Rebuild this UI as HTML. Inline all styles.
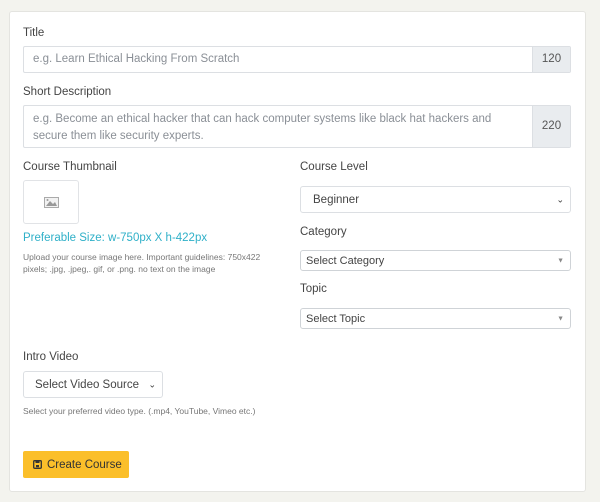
<!DOCTYPE html>
<html><head><style>
*{box-sizing:border-box;margin:0;padding:0}
body{width:600px;height:502px;background:#f3f3ee;font-family:"Liberation Sans",sans-serif;position:relative;overflow:hidden;color:#333}
.card{position:absolute;left:9px;top:11px;width:577px;height:481px;background:#fff;border:1px solid #e4e4e0;border-radius:3px}
.a{position:absolute}
.lbl{font-size:11.5px;color:#444}
.inp{border:1px solid #dcdfe3;border-radius:2px;background:#fff;font-size:11.5px;color:#8a8f96;padding-left:9px}
.sel{border:1px solid #cfd3d7;border-radius:3px;background:#fff;font-size:11px;color:#444;padding-left:5px;display:flex;align-items:center}
.caret{position:absolute;right:6px;top:50%;transform:translateY(-50%);font-size:7px;color:#888}
.cnt{position:absolute;background:#e9ecef;border-left:1px solid #dcdfe3;font-size:11.5px;color:#555;display:flex;align-items:center;justify-content:center}
</style></head><body>
<div class="card"></div>
<div class="a lbl" style="left:23px;top:27px">Title</div>
<div class="a inp" style="left:23px;top:46px;width:548px;height:27px;line-height:25px">e.g. Learn Ethical Hacking From Scratch
<div class="cnt" style="right:0;top:0;width:38px;height:25px">120</div></div>
<div class="a lbl" style="left:23px;top:86px">Short Description</div>
<div class="a inp" style="left:23px;top:105px;width:548px;height:43px;line-height:17px;padding-top:5px">e.g. Become an ethical hacker that can hack computer systems like black hat hackers and<br>secure them like security experts.
<div class="cnt" style="right:0;top:0;width:38px;height:41px">220</div></div>
<div class="a lbl" style="left:23px;top:161px">Course Thumbnail</div>
<div class="a" style="left:23px;top:180px;width:56px;height:44px;border:1px solid #e1e3e6;border-radius:3px">
<svg class="a" style="left:20px;top:16px" width="15" height="11" viewBox="0 0 15 11"><rect x=".5" y=".5" width="14" height="10" fill="#f2f2f2" stroke="#aaa"/><path d="M2 9 L6 4 L9 7 L11 5 L13 9Z" fill="#999"/><circle cx="3.5" cy="3" r="1" fill="#999"/></svg></div>
<div class="a" style="left:23px;top:232px;font-size:11.5px;color:#2fb0c8">Preferable Size: w-750px X h-422px</div>
<div class="a" style="left:23px;top:251px;font-size:8.5px;color:#777;line-height:12px;width:260px">Upload your course image here. Important guidelines: 750x422 pixels; .jpg, .jpeg,. gif, or .png. no text on the image</div>
<div class="a lbl" style="left:300px;top:161px">Course Level</div>
<div class="a sel" style="left:300px;top:186px;width:271px;height:27px;border-color:#dcdfe3;padding-left:12px;font-size:11.5px">Beginner<span class="caret" style="font-size:9px;color:#333">&#8964;</span></div>
<div class="a lbl" style="left:300px;top:226px">Category</div>
<div class="a sel" style="left:300px;top:250px;width:271px;height:21px">Select Category<span class="caret">▼</span></div>
<div class="a lbl" style="left:300px;top:283px">Topic</div>
<div class="a sel" style="left:300px;top:308px;width:271px;height:21px">Select Topic<span class="caret">▼</span></div>
<div class="a lbl" style="left:23px;top:351px">Intro Video</div>
<div class="a sel" style="left:23px;top:371px;width:140px;height:27px;border-color:#dcdfe3;padding-left:11px;font-size:11.5px">Select Video Source<span class="caret" style="font-size:9px;color:#333">&#8964;</span></div>
<div class="a" style="left:23px;top:406px;font-size:8.5px;color:#777">Select your preferred video type. (.mp4, YouTube, Vimeo etc.)</div>
<div class="a" style="left:23px;top:451px;width:106px;height:27px;background:#fbbf2a;border-radius:2px;font-size:11.5px;color:#333;display:flex;align-items:center;padding-left:10px">
<svg width="9" height="9" viewBox="0 0 9 9" style="margin-right:5px"><rect x=".7" y=".7" width="7.6" height="7.6" rx="1" fill="none" stroke="#333" stroke-width="1.3"/><rect x="2.5" y="1" width="4" height="2" fill="#333"/><rect x="3" y="5" width="3" height="2.2" fill="#333"/></svg>Create Course</div>
</body></html>
